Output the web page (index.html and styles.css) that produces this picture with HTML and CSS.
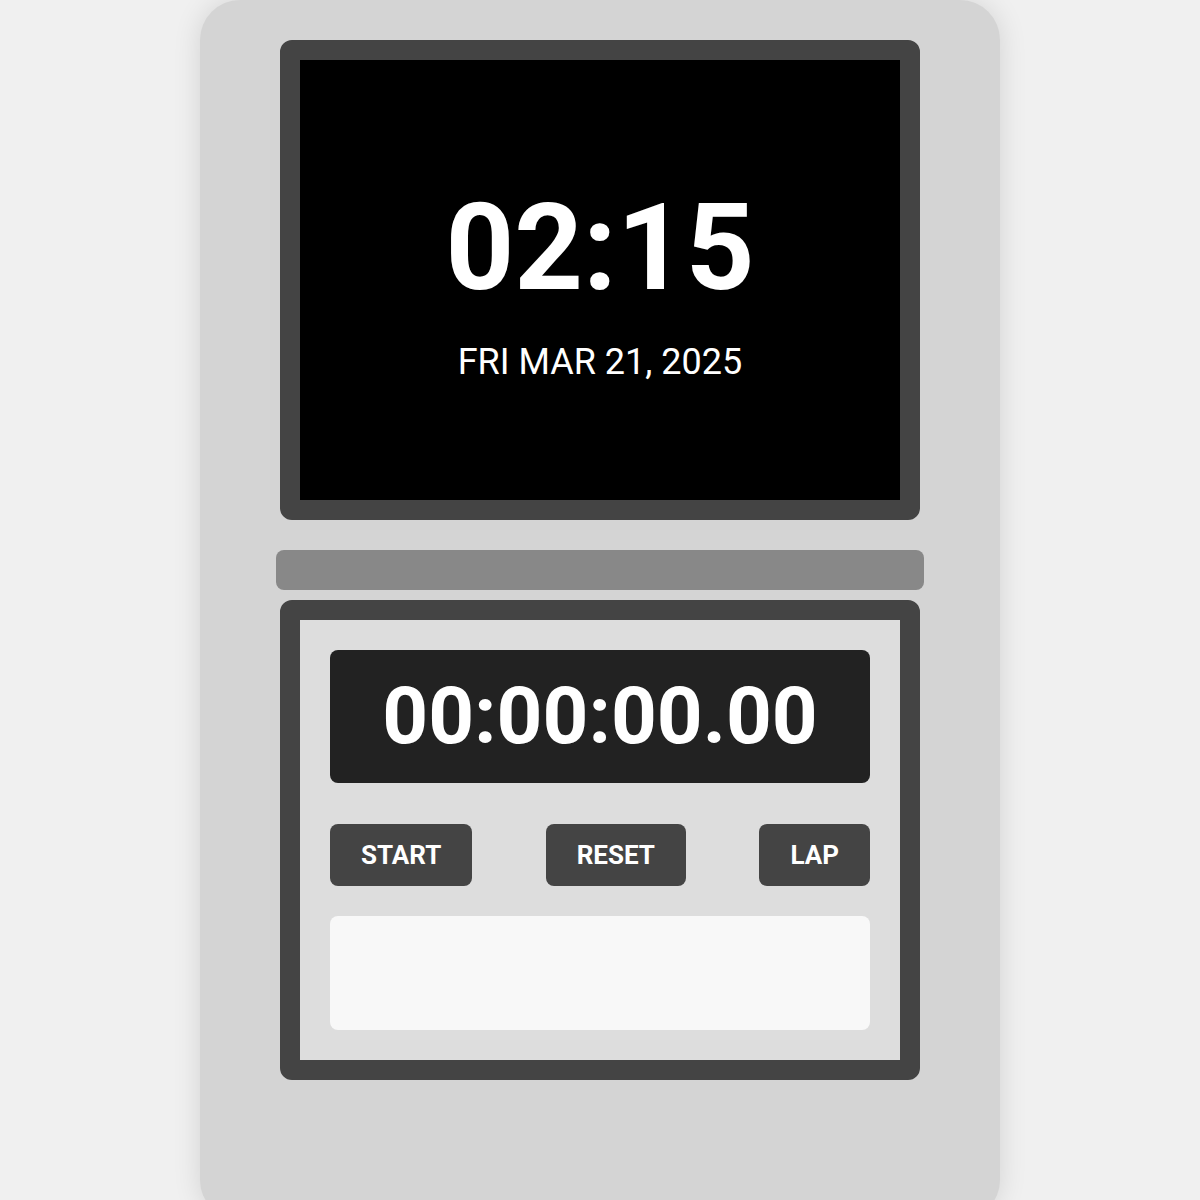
FILE: index.html
```html
<!DOCTYPE html>
<html lang="en">
<head>
    <meta charset="UTF-8">
    <meta name="viewport" content="width=device-width, initial-scale=1.0">
    <title>Clock &amp; Stopwatch</title>
    <link rel="stylesheet" href="styles.css">
</head>
<body>
    <div class="dispositivo">
        <div class="marco pantalla-reloj">
            <div class="hora" id="hora">02:15</div>
            <div class="fecha" id="fecha">FRI MAR 21, 2025</div>
        </div>

        <div class="bisagra"></div>

        <div class="marco panel-cronometro">
            <div class="display-cronometro" id="cronometro">00:00:00.00</div>

            <div class="controles">
                <button type="button" class="btn" id="btnStart">START</button>
                <button type="button" class="btn" id="btnReset">RESET</button>
                <button type="button" class="btn" id="btnLap">LAP</button>
            </div>

            <div class="lista-vueltas" id="vueltas"></div>
        </div>
    </div>
</body>
</html>
```

FILE: styles.css
```css
:root {
    --color-marco: #444;
    --color-cuerpo: #d4d4d4;
}

* {
    box-sizing: border-box;
}

body {
    font-family: Roboto, "Liberation Sans", Arial, sans-serif;
    background-color: #f0f0f0;
    margin: 0;
    padding: 0;
    display: flex;
    justify-content: center;
}

.dispositivo {
    width: 800px;
    background-color: var(--color-cuerpo);
    border-radius: 40px;
    padding: 40px 80px 140px;
    box-shadow: 0 0 28px rgba(0, 0, 0, 0.12);
}

.marco {
    border: 20px solid var(--color-marco);
    border-radius: 12px;
}

/* pantalla del reloj */
.pantalla-reloj {
    height: 480px;
    background-color: #000;
    color: #fff;
    display: flex;
    flex-direction: column;
    align-items: center;
    justify-content: center;
}

.hora {
    font-size: 120px;
    font-weight: bold;
    line-height: 140px;
    margin-top: 2px;
}

.fecha {
    font-size: 36px;
    line-height: 44px;
    margin-top: 22px;
}

.bisagra {
    height: 40px;
    background-color: #888;
    border-radius: 8px;
    margin: 30px -4px 10px;
}

/* cronometro */
.panel-cronometro {
    background-color: #ddd;
    padding: 30px;
}

.display-cronometro {
    background-color: #222;
    color: #fff;
    border-radius: 8px;
    padding: 20px;
    font-size: 80px;
    font-weight: bold;
    line-height: 93px;
    text-align: center;
}

.controles {
    display: flex;
    justify-content: space-between;
    margin: 41px 0 30px;
}

.btn {
    font-family: inherit;
    background-color: var(--color-marco);
    color: #fff;
    border: none;
    border-radius: 8px;
    padding: 15px 31px;
    font-size: 26px;
    font-weight: bold;
    line-height: 32px;
    cursor: pointer;
}

.lista-vueltas {
    height: 114px;
    background-color: #f8f8f8;
    border-radius: 8px;
}
```
